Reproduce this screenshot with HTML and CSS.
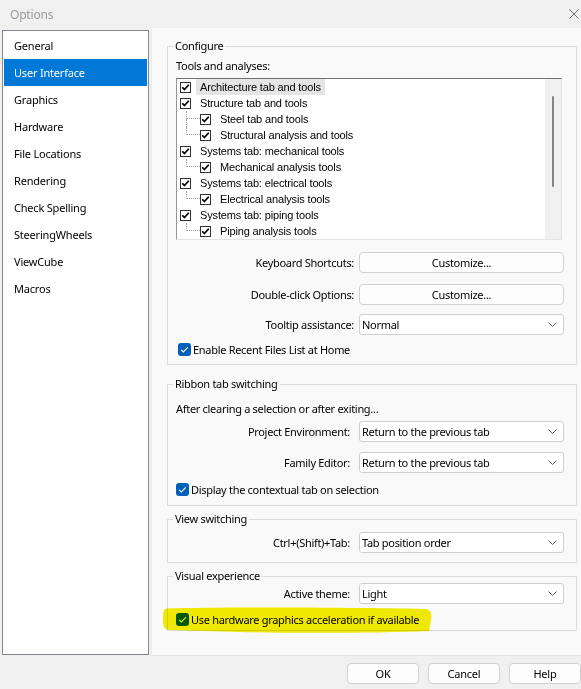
FILE: index.html
```html
<!DOCTYPE html>
<html lang="en">
<head>
<meta charset="utf-8">
<title>Options</title>
<link rel="stylesheet" href="styles.css">
</head>
<body>
<div class="window">
  <div class="titlebar">
    <span class="title">Options</span>
    <svg class="close" width="10" height="10" viewBox="0 0 10 10"><path d="M0.5 0.5 L9.5 9.5 M9.5 0.5 L0.5 9.5" stroke="#6e6e6e" stroke-width="1" fill="none"/></svg>
  </div>
  <div class="main">
    <ul class="nav">
      <li>General</li>
      <li class="active">User Interface</li>
      <li>Graphics</li>
      <li>Hardware</li>
      <li>File Locations</li>
      <li>Rendering</li>
      <li>Check Spelling</li>
      <li>SteeringWheels</li>
      <li>ViewCube</li>
      <li>Macros</li>
    </ul>
    <div class="content">
      <fieldset class="grp g-config">
        <legend>Configure</legend>
        <div class="sub">Tools and analyses:</div>
        <div class="tree">
          <div class="tree-items">
            <div class="ti"><span class="cb"><svg width="9" height="9" viewBox="0 0 9 9"><path d="M1.3 4.3 L3.4 6.6 L7.8 1.8" stroke="#000" stroke-width="1.7" fill="none"/></svg></span><span class="tl hl">Architecture tab and tools</span></div>
            <div class="ti"><span class="cb"><svg width="9" height="9" viewBox="0 0 9 9"><path d="M1.3 4.3 L3.4 6.6 L7.8 1.8" stroke="#000" stroke-width="1.7" fill="none"/></svg></span><span class="tl">Structure tab and tools</span></div>
            <div class="ti child"><span class="conn mid"><span class="cu"></span><span class="cd"></span></span><span class="cb"><svg width="9" height="9" viewBox="0 0 9 9"><path d="M1.3 4.3 L3.4 6.6 L7.8 1.8" stroke="#000" stroke-width="1.7" fill="none"/></svg></span><span class="tl">Steel tab and tools</span></div>
            <div class="ti child"><span class="conn"><span class="cu"></span><span class="cd"></span></span><span class="cb"><svg width="9" height="9" viewBox="0 0 9 9"><path d="M1.3 4.3 L3.4 6.6 L7.8 1.8" stroke="#000" stroke-width="1.7" fill="none"/></svg></span><span class="tl">Structural analysis and tools</span></div>
            <div class="ti"><span class="cb"><svg width="9" height="9" viewBox="0 0 9 9"><path d="M1.3 4.3 L3.4 6.6 L7.8 1.8" stroke="#000" stroke-width="1.7" fill="none"/></svg></span><span class="tl">Systems tab: mechanical tools</span></div>
            <div class="ti child"><span class="conn"><span class="cu"></span><span class="cd"></span></span><span class="cb"><svg width="9" height="9" viewBox="0 0 9 9"><path d="M1.3 4.3 L3.4 6.6 L7.8 1.8" stroke="#000" stroke-width="1.7" fill="none"/></svg></span><span class="tl">Mechanical analysis tools</span></div>
            <div class="ti"><span class="cb"><svg width="9" height="9" viewBox="0 0 9 9"><path d="M1.3 4.3 L3.4 6.6 L7.8 1.8" stroke="#000" stroke-width="1.7" fill="none"/></svg></span><span class="tl">Systems tab: electrical tools</span></div>
            <div class="ti child"><span class="conn"><span class="cu"></span><span class="cd"></span></span><span class="cb"><svg width="9" height="9" viewBox="0 0 9 9"><path d="M1.3 4.3 L3.4 6.6 L7.8 1.8" stroke="#000" stroke-width="1.7" fill="none"/></svg></span><span class="tl">Electrical analysis tools</span></div>
            <div class="ti"><span class="cb"><svg width="9" height="9" viewBox="0 0 9 9"><path d="M1.3 4.3 L3.4 6.6 L7.8 1.8" stroke="#000" stroke-width="1.7" fill="none"/></svg></span><span class="tl">Systems tab: piping tools</span></div>
            <div class="ti child"><span class="conn"><span class="cu"></span><span class="cd"></span></span><span class="cb"><svg width="9" height="9" viewBox="0 0 9 9"><path d="M1.3 4.3 L3.4 6.6 L7.8 1.8" stroke="#000" stroke-width="1.7" fill="none"/></svg></span><span class="tl">Piping analysis tools</span></div>
          </div>
          <div class="vscroll"><div class="thumb"></div></div>
        </div>
        <div class="frow r-kbd"><span class="lbl">Keyboard Shortcuts:</span><button class="btn">Customize...</button></div>
        <div class="frow r-dbl"><span class="lbl">Double-click Options:</span><button class="btn">Customize...</button></div>
        <div class="frow r-tip"><span class="lbl">Tooltip assistance:</span><div class="sel"><span>Normal</span><svg width="9" height="5" viewBox="0 0 9 5"><path d="M0.5 0.5 L4.5 4.5 L8.5 0.5" stroke="#606060" stroke-width="1" fill="none"/></svg></div></div>
        <div class="crow r-recent"><span class="fcb"><svg width="13" height="13" viewBox="0 0 13 13"><path d="M3.2 6.8 L5.4 9 L9.8 4.3" stroke="#fff" stroke-width="1.2" fill="none"/></svg></span><span>Enable Recent Files List at Home</span></div>
      </fieldset>

      <fieldset class="grp g-ribbon">
        <legend>Ribbon tab switching</legend>
        <div class="sub2">After clearing a selection or after exiting...</div>
        <div class="frow wide r-proj"><span class="lbl">Project Environment:</span><div class="sel"><span>Return to the previous tab</span><svg width="9" height="5" viewBox="0 0 9 5"><path d="M0.5 0.5 L4.5 4.5 L8.5 0.5" stroke="#606060" stroke-width="1" fill="none"/></svg></div></div>
        <div class="frow wide r-fam"><span class="lbl">Family Editor:</span><div class="sel"><span>Return to the previous tab</span><svg width="9" height="5" viewBox="0 0 9 5"><path d="M0.5 0.5 L4.5 4.5 L8.5 0.5" stroke="#606060" stroke-width="1" fill="none"/></svg></div></div>
        <div class="crow r-ctx"><span class="fcb"><svg width="13" height="13" viewBox="0 0 13 13"><path d="M3.2 6.8 L5.4 9 L9.8 4.3" stroke="#fff" stroke-width="1.2" fill="none"/></svg></span><span>Display the contextual tab on selection</span></div>
      </fieldset>

      <fieldset class="grp g-view">
        <legend>View switching</legend>
        <div class="frow wide r-ctrl"><span class="lbl">Ctrl+(Shift)+Tab:</span><div class="sel"><span>Tab position order</span><svg width="9" height="5" viewBox="0 0 9 5"><path d="M0.5 0.5 L4.5 4.5 L8.5 0.5" stroke="#606060" stroke-width="1" fill="none"/></svg></div></div>
      </fieldset>

      <fieldset class="grp g-visual">
        <legend>Visual experience</legend>
        <div class="frow wide r-theme"><span class="lbl">Active theme:</span><div class="sel"><span>Light</span><svg width="9" height="5" viewBox="0 0 9 5"><path d="M0.5 0.5 L4.5 4.5 L8.5 0.5" stroke="#606060" stroke-width="1" fill="none"/></svg></div></div>
        <div class="crow r-hw"><span class="fcb"><svg width="13" height="13" viewBox="0 0 13 13"><path d="M3.2 6.8 L5.4 9 L9.8 4.3" stroke="#fff" stroke-width="1.2" fill="none"/></svg></span><span>Use hardware graphics acceleration if available</span></div>
      </fieldset>
    </div>
  </div>
  <div class="footer">
    <button class="fbtn">OK</button>
    <button class="fbtn">Cancel</button>
    <button class="fbtn">Help</button>
  </div>
  <svg class="marker" width="275" height="33" viewBox="160 603 275 33"><path d="M167 608.5 C230 607 350 607.5 425 609 C431 609.5 432 614 431 620 L429 631 C380 633 300 633.5 240 632 L170 630 C164 629.5 163 626 163 619 C163 612 163.5 608.7 167 608.5 Z" fill="#f5ee00"/></svg>
</div>
</body>
</html>
```

FILE: styles.css
```css
* { box-sizing: border-box; }
html, body { margin: 0; padding: 0; }
body {
  width: 581px;
  height: 689px;
  overflow: hidden;
  background: #f0f0f0;
  font-family: "Noto Sans", "Segoe UI", sans-serif;
  font-size: 11px;
  letter-spacing: -0.3px;
  color: #000;
}
.window {
  position: relative;
  width: 581px;
  height: 689px;
}
.titlebar {
  height: 28px;
  display: flex;
  align-items: center;
  justify-content: space-between;
  padding: 0 2px 0 10px;
}
.title { font-size: 12px; color: #9a9a9a; letter-spacing: -0.2px; }
.close { display: block; margin-top: -1px; }

.main { display: flex; height: 628px; }

.nav {
  list-style: none;
  margin: 2px 0 0 2px;
  padding: 1px;
  width: 147px;
  height: 625px;
  background: #fff;
  border: 1px solid #828790;
  letter-spacing: -0.2px;
}
.nav li {
  height: 27px;
  line-height: 27px;
  padding-left: 10px;
}
.nav li.active { background: #0078d7; color: #fff; }

.content {
  margin-left: 2px;
  width: 430px;
  height: 628px;
  background: #f9f9f9;
  border-left: 1px solid #ececec;
  border-bottom: 1px solid #e2e2e2;
  padding-left: 15px;
}

.grp {
  width: 410px;
  margin: 0;
  min-width: 0;
  border: 1px solid #dcdcdc;
  padding: 0 12px 0 8px;
}
.grp legend {
  margin-left: -3px;
  padding: 0 2px;
  line-height: 16px;
}
.g-config { margin-top: 10px; padding-bottom: 7px; }
.g-ribbon { margin-top: 11px; padding-bottom: 8px; }
.g-view { margin-top: 5px; padding-bottom: 9px; }
.g-visual { margin-top: 5px; padding-bottom: 3px; }

.sub { margin-top: 4px; line-height: 16px; }
.sub2 { margin-top: 9px; line-height: 16px; }

.tree {
  margin-top: 4px;
  width: 386px;
  height: 162px;
  display: flex;
  background: #fff;
  border: 1px solid;
  border-color: #707070 #e3e3e3 #e3e3e3 #969696;
  overflow: hidden;
  font-family: "Liberation Sans", Arial, sans-serif;
  font-size: 11px;
  letter-spacing: -0.15px;
}
.tree-items { flex: 1; }
.ti {
  height: 16px;
  display: flex;
  align-items: center;
  padding-left: 3px;
}
.ti.child { padding-left: 9px; }
.conn {
  width: 14px;
  height: 16px;
  display: flex;
  flex-direction: column;
}
.conn .cu {
  height: 8px;
  border-left: 1px dotted #a0a0a0;
  border-bottom: 1px dotted #a0a0a0;
}
.conn .cd { height: 8px; }
.conn.mid .cd { border-left: 1px dotted #a0a0a0; }
.cb {
  width: 11px;
  height: 11px;
  border: 1px solid #333;
  background: #fff;
  display: flex;
  flex: none;
}
.cb svg { display: block; }
.tl {
  margin-left: 5px;
  padding: 0 4px;
  line-height: 16px;
  white-space: nowrap;
}
.tl.hl { background: #e5e5e5; }
.vscroll { width: 16px; background: #f0f0f0; flex: none; }
.thumb {
  width: 2px;
  height: 91px;
  margin: 17px 0 0 7px;
  background: #858585;
  border-radius: 1px;
}

.frow {
  display: grid;
  grid-template-columns: 1fr 205px;
  column-gap: 5px;
  align-items: center;
}
.frow.wide { column-gap: 9px; }
.lbl { text-align: right; white-space: nowrap; }
.btn {
  height: 21px;
  margin: 0;
  padding: 0;
  font: inherit;
  letter-spacing: inherit;
  color: #000;
  background: #fdfdfd;
  border: 1px solid #d0d0d0;
  border-radius: 4px;
}
.sel {
  height: 21px;
  display: flex;
  align-items: center;
  justify-content: space-between;
  padding: 0 6px 0 2px;
  background: #fff;
  border: 1px solid #cfcfcf;
  border-radius: 3px;
}
.sel svg { display: block; }

.r-kbd { margin-top: 12px; }
.r-dbl { margin-top: 11px; }
.r-tip { margin-top: 9px; }
.r-proj { margin-top: 4px; }
.r-fam { margin-top: 10px; }
.r-ctrl { margin-top: 5px; }
.r-theme { margin-top: -1px; }

.crow {
  display: flex;
  align-items: center;
  gap: 2px;
  height: 15px;
}
.r-recent { margin-top: 7px; padding-left: 2px; }
.r-ctx { margin-top: 9px; }
.r-hw { margin-top: 8px; }
.fcb {
  width: 13px;
  height: 13px;
  flex: none;
  border-radius: 3px;
  background: #005fb8;
}
.fcb svg { display: block; }

.footer {
  height: 33px;
  display: flex;
  justify-content: flex-end;
  gap: 9px;
  padding-top: 7px;
}
.fbtn {
  width: 72px;
  height: 21px;
  margin: 0;
  padding: 0;
  font: inherit;
  letter-spacing: -0.2px;
  color: #000;
  background: #fdfdfd;
  border: 1px solid #d0d0d0;
  border-radius: 4px;
}

.marker {
  position: absolute;
  left: 160px;
  top: 603px;
  mix-blend-mode: multiply;
  pointer-events: none;
}
```
